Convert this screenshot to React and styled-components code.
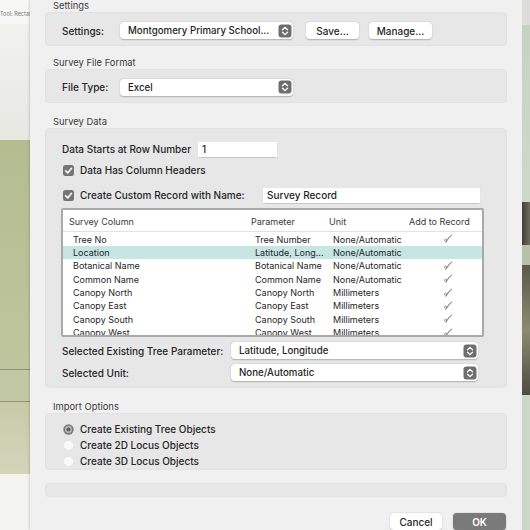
import styled, { createGlobalStyle } from 'styled-components'

const GlobalStyle = createGlobalStyle`
  html, body {
    margin: 0;
    padding: 0;
    background: #f0f0f0;
  }
  body {
    font-family: "Inter", "Liberation Sans", sans-serif;
    -webkit-font-smoothing: antialiased;
  }
`

const Page = styled.div`
  display: flex;
  width: 530px;
  height: 530px;
  overflow: hidden;
`

const Backdrop = styled.div`
  display: flex;
  flex-direction: column;
  width: ${p => p.$width}px;
  flex: none;
  overflow: hidden;
`

const Strip = styled.div`
  height: ${p => p.$h}px;
  flex: none;
  background: ${p => p.$bg};
  border-bottom: ${p => (p.$line ? '1px solid #8f9273' : 'none')};
  font-size: 5.5px;
  color: #777;
  white-space: nowrap;
  padding-top: ${p => (p.$text ? '11px' : '0')};
  box-sizing: border-box;
`

const Dialog = styled.div`
  width: 492px;
  flex: none;
  background: #f0f0f0;
  padding: 0 15px;
  box-sizing: border-box;
  box-shadow: -1px 0 2px rgba(0, 0, 0, 0.15), 1px 0 0 #9a9a96;
  display: flex;
  flex-direction: column;
  color: #262626;
`

const SectionTitle = styled.div`
  font-size: 9.4px;
  line-height: 12px;
  color: #3c3c3c;
  padding-left: 8px;
  margin-top: ${p => p.$top || 0}px;
`

const Panel = styled.div`
  background: #e7e7e7;
  border: 1px solid #e2e2e2;
  border-radius: 4px;
  box-sizing: border-box;
  height: ${p => (p.$h ? `${p.$h}px` : 'auto')};
  margin-top: ${p => p.$top || 0}px;
  padding: ${p => p.$pad || '0 0 0 16px'};
  display: flex;
  flex-direction: ${p => (p.$column ? 'column' : 'row')};
  align-items: ${p => (p.$column ? 'stretch' : 'center')};
`

const Label = styled.span`
  font-size: 10px;
  font-weight: 500;
  width: ${p => (p.$w ? `${p.$w}px` : 'auto')};
  flex: none;
  white-space: nowrap;
`

const Popup = styled.div`
  width: ${p => p.$w}px;
  height: 17px;
  background: #fff;
  border-radius: 4px;
  box-shadow: 0 0.5px 1.5px rgba(0, 0, 0, 0.25);
  display: flex;
  align-items: center;
  justify-content: space-between;
  padding: 0 1px 0 8px;
  box-sizing: border-box;
  font-size: 9.7px;
  font-weight: 500;
  flex: none;
`

const PushButton = styled.div`
  width: ${p => p.$w}px;
  height: 17px;
  margin-left: ${p => p.$left}px;
  border-radius: 4px;
  background: ${p => (p.$primary ? '#7a7a7a' : '#fff')};
  color: ${p => (p.$primary ? '#fff' : '#262626')};
  font-weight: ${p => (p.$primary ? 600 : 500)};
  box-shadow: 0 0.5px 1.5px rgba(0, 0, 0, 0.25);
  font-size: 10px;
  display: flex;
  align-items: center;
  justify-content: center;
  flex: none;
`

const Row = styled.div`
  display: flex;
  align-items: center;
  height: ${p => p.$h || 16}px;
  margin-top: ${p => p.$top || 0}px;
`

const TextInput = styled.div`
  width: ${p => p.$w}px;
  height: 15px;
  background: #fff;
  margin-left: ${p => (p.$auto ? 'auto' : `${p.$left}px`)};
  margin-right: ${p => p.$right || 0}px;
  box-shadow: 0 0.5px 1px rgba(0, 0, 0, 0.15);
  font-size: 10px;
  font-weight: 500;
  display: flex;
  align-items: center;
  padding-left: 4px;
  box-sizing: border-box;
`

const Check = styled.span`
  display: inline-flex;
  width: 11px;
  height: 11px;
  margin: 0 6px 0 1px;
  flex: none;
`

const Table = styled.div`
  margin-top: 5px;
  margin-right: 6px;
  margin-left: -1px;
  height: 129px;
  border: 2px solid #a9a9a9;
  border-radius: 2px;
  background: #fff;
  box-sizing: border-box;
  overflow: hidden;
`

const TableRow = styled.div`
  display: grid;
  grid-template-columns: 182px 78px 80px 1fr;
  align-items: center;
  height: ${p => (p.$head ? 20 : 13.4)}px;
  padding-left: ${p => (p.$head ? 6 : 10)}px;
  font-size: 9px;
  color: ${p => (p.$head ? '#3a3a3a' : '#262626')};
  background: ${p => (p.$selected ? '#c7e5e3' : 'transparent')};
  border-bottom: ${p => (p.$head ? '1px solid #e2e2e2' : 'none')};
  margin-top: ${p => (p.$head ? 1 : 0)}px;
  white-space: nowrap;
`

const CheckCell = styled.span`
  display: flex;
  padding-left: 30px;
`

const SelectRow = styled.div`
  display: grid;
  grid-template-columns: 169px 247px;
  align-items: center;
  height: 16px;
  margin-top: ${p => p.$top || 0}px;
`

const RadioRow = styled.div`
  display: flex;
  align-items: center;
  height: 16px;
  font-size: 10px;
  font-weight: 500;
`

const RadioDot = styled.span`
  display: inline-flex;
  width: 11px;
  height: 11px;
  margin: 0 6px 0 1px;
`

const Footer = styled.div`
  display: flex;
  justify-content: flex-end;
  padding-right: 1px;
  margin-top: 16px;
`

function Stepper() {
  return (
    <svg width="14" height="14" viewBox="0 0 14 14">
      <rect x="0.5" y="0.5" width="13" height="13" rx="3" fill="#6e6e6e" />
      <path d="M4.5 5.8 L7 3.4 L9.5 5.8" fill="none" stroke="#fff" strokeWidth="1.3" strokeLinecap="round" strokeLinejoin="round" />
      <path d="M4.5 8.2 L7 10.6 L9.5 8.2" fill="none" stroke="#fff" strokeWidth="1.3" strokeLinecap="round" strokeLinejoin="round" />
    </svg>
  )
}

function CheckBox() {
  return (
    <Check>
      <svg width="11" height="11" viewBox="0 0 11 11">
        <rect x="0" y="0" width="11" height="11" rx="2.5" fill="#757575" />
        <path d="M2.6 5.8 L4.7 7.9 L8.5 3.3" fill="none" stroke="#fff" strokeWidth="1.6" strokeLinecap="round" strokeLinejoin="round" />
      </svg>
    </Check>
  )
}

function Radio({ on }) {
  return (
    <RadioDot>
      <svg width="11" height="11" viewBox="0 0 11 11">
        {on ? (
          <>
            <circle cx="5.5" cy="5.5" r="5.2" fill="#7c7c7c" />
            <circle cx="5.5" cy="5.5" r="3.4" fill="#bcbcbc" />
            <circle cx="5.5" cy="5.5" r="2.1" fill="#5f5f5f" />
          </>
        ) : (
          <circle cx="5.5" cy="5.5" r="5" fill="#fafafa" stroke="#e0e0e0" strokeWidth="0.6" />
        )}
      </svg>
    </RadioDot>
  )
}

function Tick() {
  return (
    <svg width="10" height="10" viewBox="0 0 10 10">
      <circle cx="2.6" cy="6.2" r="1.1" fill="none" stroke="#8c8c8c" strokeWidth="0.9" />
      <path d="M3.4 7.2 C4.6 5.2 6.2 3.2 8.6 1.2" fill="none" stroke="#8c8c8c" strokeWidth="1.1" strokeLinecap="round" />
      <path d="M2.8 8.4 L3.6 7.2" fill="none" stroke="#8c8c8c" strokeWidth="1" strokeLinecap="round" />
    </svg>
  )
}

const rows = [
  ['Tree No', 'Tree Number', 'None/Automatic', true],
  ['Location', 'Latitude, Long...', 'None/Automatic', false],
  ['Botanical Name', 'Botanical Name', 'None/Automatic', true],
  ['Common Name', 'Common Name', 'None/Automatic', true],
  ['Canopy North', 'Canopy North', 'Millimeters', true],
  ['Canopy East', 'Canopy East', 'Millimeters', true],
  ['Canopy South', 'Canopy South', 'Millimeters', true],
  ['Canopy West', 'Canopy West', 'Millimeters', true],
]

function App() {
  return (
    <Page>
      <GlobalStyle />
      <Backdrop $width={30}>
        <Strip $h={24} $bg="#f7f7f5" $text>Tool: Rectangle</Strip>
        <Strip $h={116} $bg="linear-gradient(#f1f1ee, #e8e8e3)" />
        <Strip $h={230} $bg="linear-gradient(#b4bc90, #bfc59e)" $line />
        <Strip $h={32} $bg="#c3c8a4" $line />
        <Strip $h={72} $bg="linear-gradient(#c7cba9, #d3d5b9)" />
        <Strip $h={56} $bg="#f3f3ef" />
      </Backdrop>

      <Dialog>
        <SectionTitle>Settings</SectionTitle>
        <Panel $h={35} $top={0} $pad="3px 0 0 16px">
          <Label $w={58}>Settings:</Label>
          <Popup $w={173}>
            Montgomery Primary School...
            <Stepper />
          </Popup>
          <PushButton $w={53} $left={13}>Save...</PushButton>
          <PushButton $w={63} $left={10}>Manage...</PushButton>
        </Panel>

        <SectionTitle $top={11}>Survey File Format</SectionTitle>
        <Panel $h={35} $pad="2px 0 0 16px">
          <Label $w={58}>File Type:</Label>
          <Popup $w={173}>
            Excel
            <Stepper />
          </Popup>
        </Panel>

        <SectionTitle $top={13}>Survey Data</SectionTitle>
        <Panel $column $pad="12px 16px 7px 16px">
          <Row>
            <Label>Data Starts at Row Number</Label>
            <TextInput $w={79} $left={7}>1</TextInput>
          </Row>
          <Row $h={14} $top={6}>
            <CheckBox />
            <Label>Data Has Column Headers</Label>
          </Row>
          <Row $top={10}>
            <CheckBox />
            <Label>Create Custom Record with Name:</Label>
            <TextInput $w={217} $auto $right={10}>Survey Record</TextInput>
          </Row>

          <Table>
            <TableRow $head>
              <span>Survey Column</span>
              <span>Parameter</span>
              <span>Unit</span>
              <span>Add to Record</span>
            </TableRow>
            {rows.map(([col, param, unit, add], i) => (
              <TableRow key={col} $selected={i === 1}>
                <span>{col}</span>
                <span>{param}</span>
                <span>{unit}</span>
                <CheckCell>{add && <Tick />}</CheckCell>
              </TableRow>
            ))}
          </Table>

          <SelectRow $top={5}>
            <Label>Selected Existing Tree Parameter:</Label>
            <Popup $w={247}>
              Latitude, Longitude
              <Stepper />
            </Popup>
          </SelectRow>
          <SelectRow $top={6}>
            <Label>Selected Unit:</Label>
            <Popup $w={247}>
              None/Automatic
              <Stepper />
            </Popup>
          </SelectRow>
        </Panel>

        <SectionTitle $top={13}>Import Options</SectionTitle>
        <Panel $column $h={58} $pad="7px 0 0 16px">
          <RadioRow><Radio on />Create Existing Tree Objects</RadioRow>
          <RadioRow><Radio />Create 2D Locus Objects</RadioRow>
          <RadioRow><Radio />Create 3D Locus Objects</RadioRow>
        </Panel>

        <Panel $h={14} $top={13} />

        <Footer>
          <PushButton $w={52} $left={0}>Cancel</PushButton>
          <PushButton $w={53} $left={11} $primary>OK</PushButton>
        </Footer>
      </Dialog>

      <Backdrop $width={8}>
        <Strip $h={25} $bg="#dcdcda" />
        <Strip $h={177} $bg="linear-gradient(#c6d3c3, #cdd8c9)" />
        <Strip $h={43} $bg="linear-gradient(90deg, #3f3f36, #6e6c5c)" />
        <Strip $h={20} $bg="#b9c0aa" />
        <Strip $h={130} $bg="linear-gradient(#5a5a4c, #8c8a70 50%, #4c4c40)" />
        <Strip $h={135} $bg="#cbd7c7" />
      </Backdrop>
    </Page>
  )
}

export default App
